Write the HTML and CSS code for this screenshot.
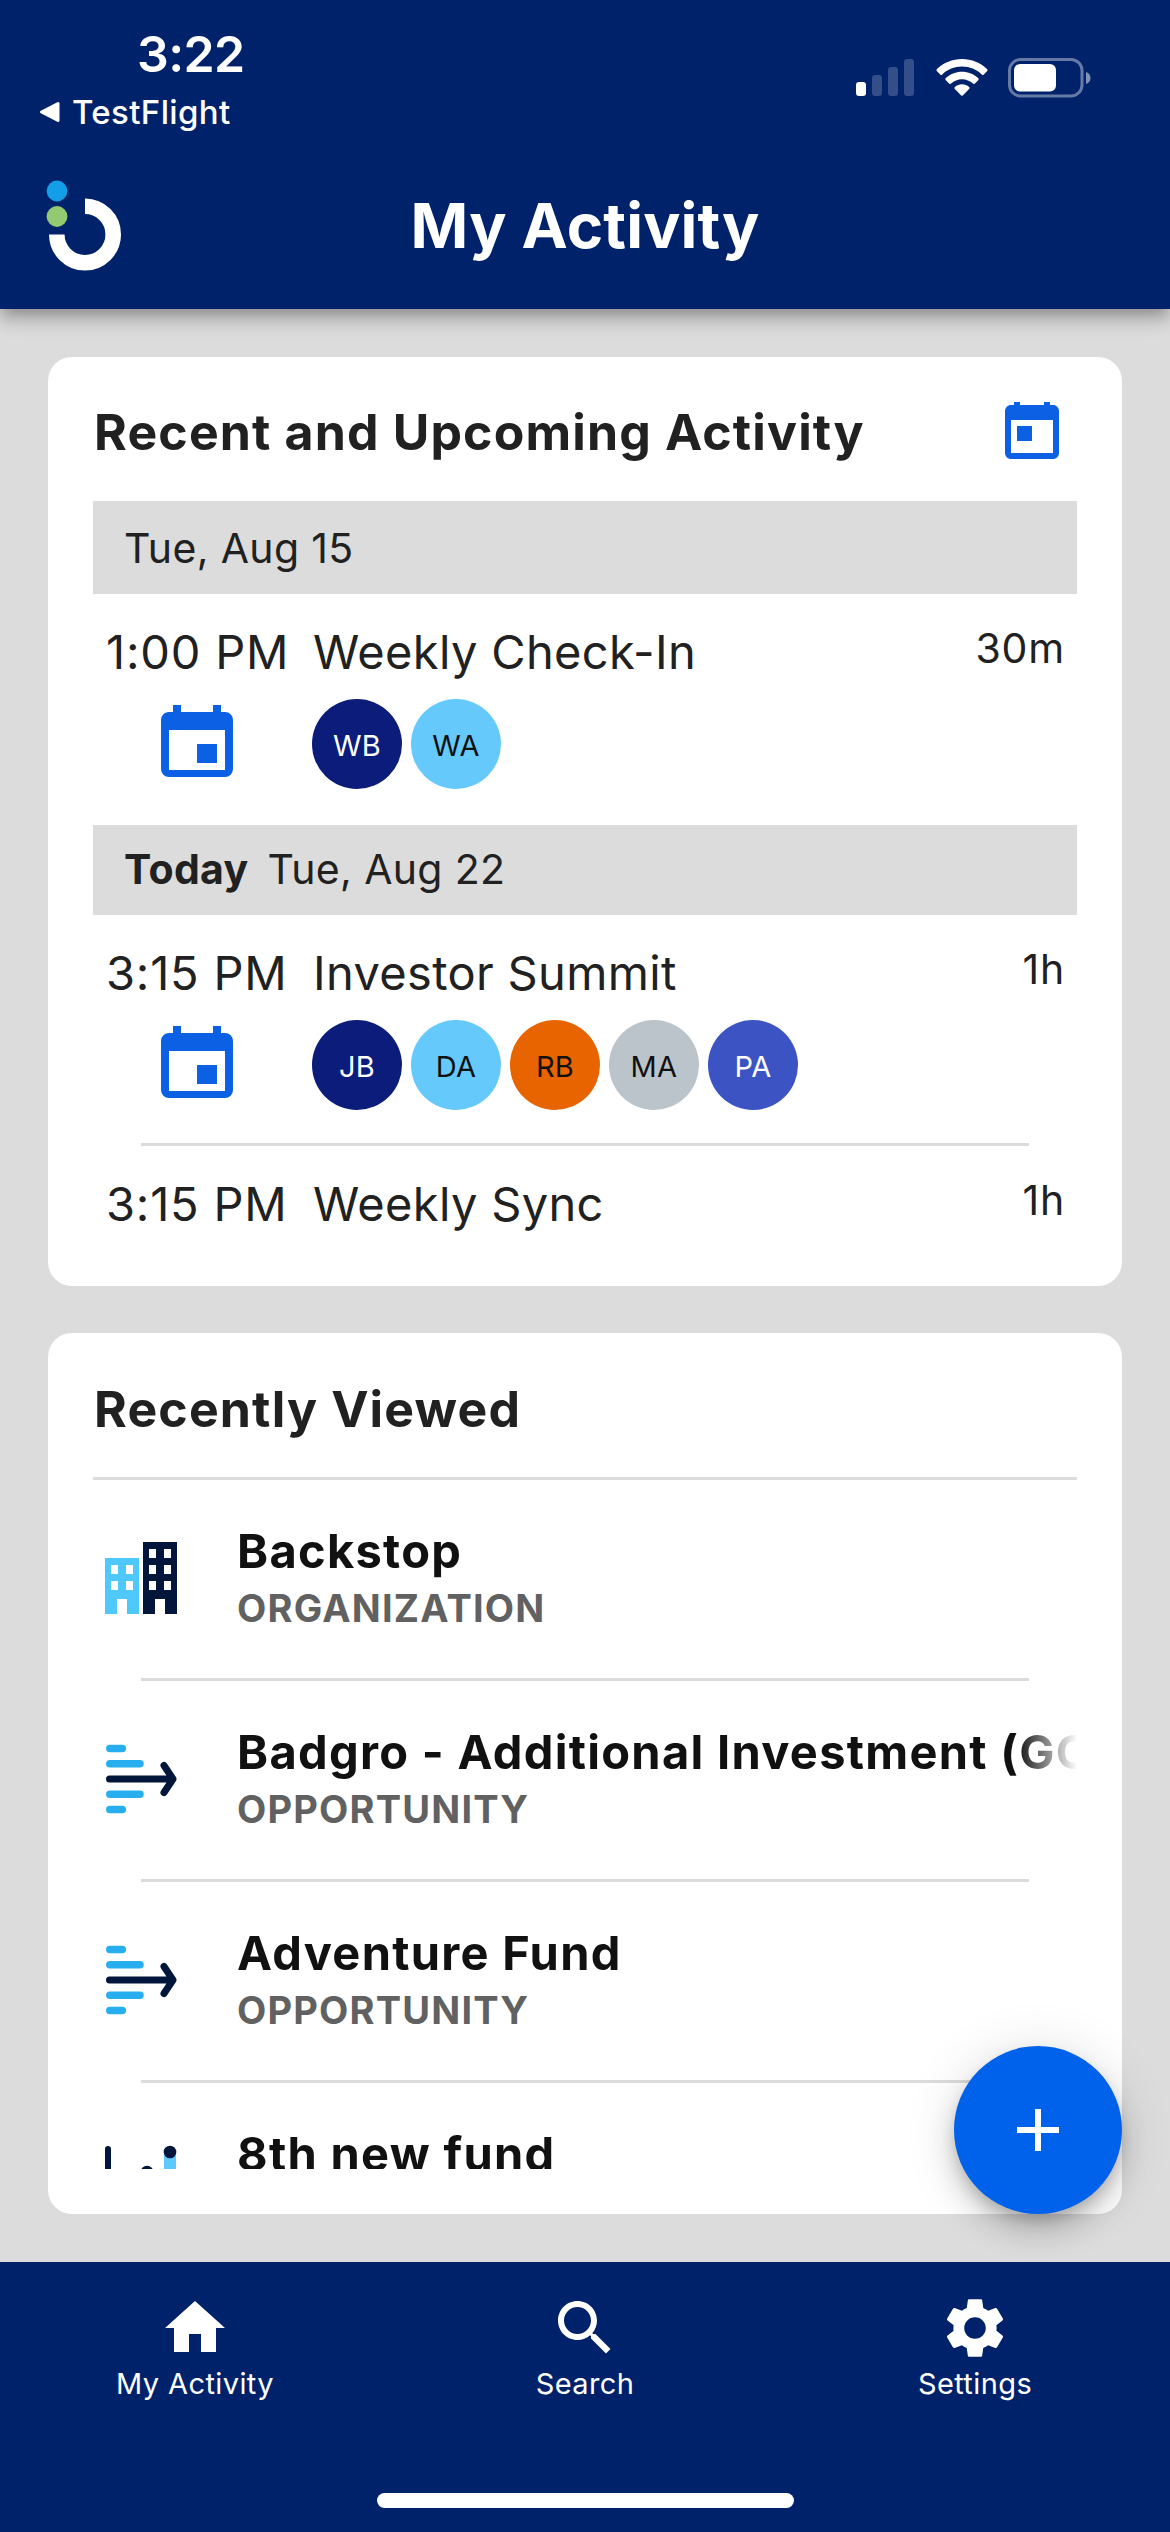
FILE: index.html
```html
<!DOCTYPE html>
<html lang="en">
<head>
    <meta charset="UTF-8">
    <meta name="viewport" content="width=device-width, initial-scale=1.0">
    <title>My Activity</title>
    <link rel="stylesheet" href="styles.css">
</head>
<body>

    <header class="header">
        <div class="status-bar">
            <div class="status-left">
                <div class="clock">3:22</div>
                <div class="back-app">
                    <svg width="21" height="22" viewBox="0 0 21 22"><path d="M19 2.5v17L2.5 11z" fill="#fff" stroke="#fff" stroke-width="3" stroke-linejoin="round"/></svg>
                    <span>TestFlight</span>
                </div>
            </div>
            <div class="status-right">
                <!-- Signal -->
                <svg width="58" height="40" viewBox="0 0 58 40" fill="#fff">
                    <rect x="0" y="24" width="10" height="14" rx="3"/>
                    <rect x="16" y="17" width="10" height="21" rx="3" opacity="0.2"/>
                    <rect x="32" y="9" width="10" height="29" rx="3" opacity="0.2"/>
                    <rect x="48" y="1" width="10" height="37" rx="3" opacity="0.2"/>
                </svg>
                <!-- Wifi -->
                <svg class="wifi" width="52" height="40" viewBox="0 0 52 40" fill="#fff">
                    <path d="M26 1C16.300 1 7.500 4.800 1 11a1.500 1.500 0 0 0 0 2.200l3.200 3.200a1.500 1.500 0 0 0 2.100 0C11.500 11.500 18.400 8.600 26 8.600s14.500 2.900 19.700 7.800a1.500 1.500 0 0 0 2.100 0l3.200-3.200a1.500 1.500 0 0 0 0-2.200C44.500 4.800 35.700 1 26 1z"/>
                    <path d="M26 13.700c-6.200 0-11.900 2.400-16.200 6.300a1.500 1.500 0 0 0 0 2.200l3.300 3.200a1.500 1.500 0 0 0 2 .1c2.900-2.600 6.700-4.200 10.900-4.200s8 1.600 10.900 4.200a1.500 1.500 0 0 0 2-.1l3.300-3.200a1.500 1.500 0 0 0 0-2.200c-4.300-3.900-10-6.300-16.200-6.300z"/>
                    <path d="M26 26.300c-2.700 0-5.200 1-7.100 2.600a1.400 1.400 0 0 0 0 2.100l6.100 6.300a1.400 1.400 0 0 0 2 0l6.100-6.300a1.400 1.400 0 0 0 0-2.100c-1.900-1.600-4.400-2.600-7.100-2.600z"/>
                </svg>
                <!-- Battery -->
                <svg class="battery" width="83" height="40" viewBox="0 0 83 40">
                    <rect x="1.500" y="1.500" width="72.500" height="36.500" rx="11" fill="none" stroke="#fff" stroke-width="3" opacity="0.4"/>
                    <rect x="6" y="6" width="42" height="27.500" rx="6" fill="#fff"/>
                    <path d="M78 14c3 1 4.500 3.300 4.500 6s-1.500 5-4.500 6z" fill="#fff" opacity="0.5"/>
                </svg>
            </div>
        </div>
        <div class="toolbar">
            <svg class="logo" width="78" height="92" viewBox="0 0 78 92">
                <circle cx="11" cy="11" r="10.400" fill="#139fe8"/>
                <circle cx="11" cy="36.500" r="10.400" fill="#93c971"/>
                <path d="M39 26.300A28.200 28.200 0 1 1 10.800 54.500" fill="none" stroke="#fff" stroke-width="15.600"/>
            </svg>
            <h1>My Activity</h1>
        </div>
    </header>

    <main class="content">
        <section class="card activity-card">
            <div class="card-header">
                <h2>Recent and Upcoming Activity</h2>
                <svg class="today-icon" width="72" height="72" viewBox="0 0 24 24" fill="#0b60e4"><path d="M19 3h-1V2h-2v1H8V2H6v1H5c-1.110 0-1.990.9-1.990 2L3 19c0 1.100.89 2 2 2h14c1.100 0 2-.9 2-2V5c0-1.100-.9-2-2-2zm0 16H5V8h14v11zM7 10h5v5H7z"/></svg>
            </div>

            <div class="day">Tue, Aug 15</div>
            <div class="event">
                <div class="event-top">
                    <span class="time">1:00 PM</span>
                    <span class="event-name">Weekly Check-In</span>
                    <span class="duration">30m</span>
                </div>
                <div class="event-bottom">
                    <svg class="event-icon" width="72" height="72" viewBox="0 0 72 72" fill="#0b60e4"><path fill-rule="evenodd" d="M8 7h4V0h8v7h32V0h8v7h4a8 8 0 0 1 8 8v49a8 8 0 0 1-8 8H8a8 8 0 0 1-8-8V15a8 8 0 0 1 8-8zM8 25v40h56V25zM36 39h20v19H36z"/></svg>
                    <div class="avatars">
                        <span class="avatar navy">WB</span>
                        <span class="avatar sky">WA</span>
                    </div>
                </div>
            </div>

            <div class="day day-today"><b>Today</b>Tue, Aug 22</div>
            <div class="event">
                <div class="event-top">
                    <span class="time">3:15 PM</span>
                    <span class="event-name">Investor Summit</span>
                    <span class="duration">1h</span>
                </div>
                <div class="event-bottom">
                    <svg class="event-icon" width="72" height="72" viewBox="0 0 72 72" fill="#0b60e4"><path fill-rule="evenodd" d="M8 7h4V0h8v7h32V0h8v7h4a8 8 0 0 1 8 8v49a8 8 0 0 1-8 8H8a8 8 0 0 1-8-8V15a8 8 0 0 1 8-8zM8 25v40h56V25zM36 39h20v19H36z"/></svg>
                    <div class="avatars">
                        <span class="avatar navy">JB</span>
                        <span class="avatar sky">DA</span>
                        <span class="avatar orange">RB</span>
                        <span class="avatar gray">MA</span>
                        <span class="avatar indigo">PA</span>
                    </div>
                </div>
            </div>
            <hr class="divider">
            <div class="event">
                <div class="event-top">
                    <span class="time">3:15 PM</span>
                    <span class="event-name">Weekly Sync</span>
                    <span class="duration">1h</span>
                </div>
            </div>
        </section>

        <section class="card viewed-card">
            <div class="card-header">
                <h2>Recently Viewed</h2>
            </div>

            <div class="viewed-list">
                <div class="item">
                    <svg class="item-icon" width="72" height="72" viewBox="0 0 72 72">
                        <path fill="#4fc9fb" fill-rule="evenodd" d="M0 16h34v56H22V57H12v15H0zM6 23v9h7v-9zM21 23v9h7v-9zM6 39v9h7v-9zM21 39v9h7v-9z"/>
                        <path fill="#02153a" fill-rule="evenodd" d="M38 0h34v72H60V57H50v15H38zM44 7v9h7V7zM59 7v9h7V7zM44 23v9h7v-9zM59 23v9h7v-9zM44 39v9h7v-9zM59 39v9h7v-9z"/>
                    </svg>
                    <div class="item-text">
                        <h3>Backstop</h3>
                        <p>ORGANIZATION</p>
                    </div>
                </div>
                <hr class="divider">
                <div class="item">
                    <svg class="item-icon" width="72" height="72" viewBox="0 0 72 72" fill="none" stroke-width="7.500" stroke-linecap="round">
                        <path stroke="#27aeee" d="M4.800 5.500h12.500M4.800 20.800H35M4.800 51.200H35M4.800 66.500h12.500"/>
                        <path stroke="#02153a" stroke-width="7" stroke-linejoin="round" d="M4.500 36h63M59 22.500L68 36l-9 13.500"/>
                    </svg>
                    <div class="item-text">
                        <h3>Badgro - Additional Investment (GO</h3>
                        <p>OPPORTUNITY</p>
                    </div>
                </div>
                <hr class="divider">
                <div class="item">
                    <svg class="item-icon" width="72" height="72" viewBox="0 0 72 72" fill="none" stroke-width="7.500" stroke-linecap="round">
                        <path stroke="#27aeee" d="M4.800 5.500h12.500M4.800 20.800H35M4.800 51.200H35M4.800 66.500h12.500"/>
                        <path stroke="#02153a" stroke-width="7" stroke-linejoin="round" d="M4.500 36h63M59 22.500L68 36l-9 13.500"/>
                    </svg>
                    <div class="item-text">
                        <h3>Adventure Fund</h3>
                        <p>OPPORTUNITY</p>
                    </div>
                </div>
                <hr class="divider">
                <div class="item">
                    <svg class="item-icon" width="72" height="72" viewBox="0 0 72 72">
                        <path fill="#5cc8fb" d="M59 8h12v58H59zM36 32h12v34H36z"/>
                        <path fill="none" stroke="#02153a" stroke-width="6" stroke-linecap="round" stroke-linejoin="round" d="M3 4v65h66"/>
                        <circle cx="65" cy="7" r="6.300" fill="#02153a"/>
                        <circle cx="42" cy="27" r="6.300" fill="#02153a"/>
                    </svg>
                    <div class="item-text">
                        <h3>8th new fund</h3>
                    </div>
                </div>
            </div>
        </section>

        <button class="fab" aria-label="Add">
            <svg width="42" height="42" viewBox="0 0 42 42"><path d="M21 0v42M0 21h42" stroke="#fff" stroke-width="6"/></svg>
        </button>
    </main>

    <nav class="tabs">
        <div class="tab-row">
            <a class="tab">
                <svg width="72" height="72" viewBox="0 0 24 24" fill="#fff"><path d="M10 20v-6h4v6h5v-8h3L12 3 2 12h3v8z"/></svg>
                <span>My Activity</span>
            </a>
            <a class="tab">
                <svg width="72" height="72" viewBox="0 0 24 24" fill="#fff"><path d="M15.500 14h-.79l-.28-.27C15.410 12.590 16 11.110 16 9.500 16 5.910 13.090 3 9.500 3S3 5.910 3 9.500 5.910 16 9.500 16c1.610 0 3.090-.59 4.230-1.570l.27.28v.79l5 4.990L20.490 19l-4.990-5zm-6 0C7.010 14 5 11.990 5 9.500S7.010 5 9.500 5 14 7.010 14 9.500 11.990 14 9.500 14z"/></svg>
                <span>Search</span>
            </a>
            <a class="tab">
                <svg width="72" height="72" viewBox="0 0 24 24" fill="#fff"><path d="M19.140 12.940c.04-.3.06-.61.06-.94 0-.32-.02-.64-.07-.94l2.030-1.580c.18-.14.23-.41.12-.61l-1.920-3.320c-.12-.22-.37-.29-.59-.22l-2.390.96c-.5-.38-1.030-.7-1.620-.94l-.36-2.540c-.04-.24-.24-.41-.48-.41h-3.840c-.24 0-.43.17-.47.41l-.36 2.540c-.59.24-1.130.57-1.620.94l-2.390-.96c-.22-.08-.47 0-.59.22L2.740 8.870c-.12.21-.08.47.12.61l2.030 1.580c-.05.3-.09.63-.09.94s.02.64.07.94l-2.030 1.580c-.18.14-.23.41-.12.61l1.920 3.320c.12.22.37.29.59.22l2.390-.96c.5.38 1.030.7 1.620.94l.36 2.540c.05.24.24.41.48.41h3.840c.24 0 .44-.17.47-.41l.36-2.540c.59-.24 1.130-.56 1.620-.94l2.390.96c.22.08.47 0 .59-.22l1.920-3.320c.12-.22.07-.47-.12-.61l-2.010-1.580zM12 15.600c-1.980 0-3.600-1.620-3.600-3.600s1.620-3.600 3.600-3.600 3.600 1.620 3.600 3.600-1.620 3.600-3.600 3.600z"/></svg>
                <span>Settings</span>
            </a>
        </div>
        <div class="home-indicator"></div>
    </nav>

</body>
</html>
```
FILE: styles.css
```css
* {
    box-sizing: border-box;
}
body {
    font-family: Inter, sans-serif;
    margin: 0;
    padding: 0;
    width: 1170px;
    height: 2532px;
    background-color: #dcdcdc;
    color: #212121;
    display: flex;
    flex-direction: column;
    overflow: hidden;
}
h1, h2, h3, p {
    margin: 0;
}
svg {
    display: block;
    flex-shrink: 0;
}

/* Header */
.header {
    position: relative;
    z-index: 1;
    height: 309px;
    background-color: #00226b;
    color: #fff;
    box-shadow: 0 6px 12px -3px rgba(0, 0, 0, 0.2), 0 12px 15px rgba(0, 0, 0, 0.14), 0 3px 30px rgba(0, 0, 0, 0.12);
}
.status-bar {
    height: 142px;
    padding: 24px 79px 0 39px;
    display: flex;
    justify-content: space-between;
}
.clock {
    font-size: 50px;
    font-weight: 600;
    line-height: 60px;
    letter-spacing: -0.6px;
    padding-left: 98px;
}
.back-app {
    margin-top: 8px;
    display: flex;
    align-items: center;
    gap: 12px;
    font-size: 33px;
    font-weight: 500;
    line-height: 40px;
    letter-spacing: 0.36px;
}
.status-right {
    display: flex;
    align-items: flex-start;
    padding-top: 34px;
}
.wifi {
    margin-left: 22px;
}
.battery {
    margin-left: 20px;
}
.toolbar {
    height: 167px;
    padding: 0 46px;
    display: grid;
    grid-template-columns: 78px 1fr 78px;
    align-items: center;
}
.toolbar h1 {
    font-size: 62px;
    font-weight: 650;
    letter-spacing: 0.2px;
    line-height: 74px;
    text-align: center;
}

/* Cards */
.content {
    position: relative;
    height: 1953px;
    padding: 48px;
    display: flex;
    flex-direction: column;
    gap: 47px;
}
.card {
    background-color: #fff;
    border-radius: 24px;
    padding: 0 45px;
    overflow: hidden;
}
.activity-card {
    height: 929px;
}
.viewed-card {
    height: 881px;
    padding-bottom: 45px;
}
.card-header {
    height: 147px;
    padding: 6px 9px 0 1px;
    border-bottom: 3px solid #dcdcdc;
    display: flex;
    align-items: center;
    justify-content: space-between;
}
.card-header h2 {
    font-size: 50px;
    font-weight: 700;
    letter-spacing: 1.15px;
}
.viewed-card .card-header {
    padding-top: 8px;
}
.divider {
    height: 3px;
    margin: 0 48px;
    border: none;
    background-color: #dcdcdc;
}

/* Activity */
.day {
    height: 90px;
    padding: 0 31px 3px;
    background-color: #dcdcdc;
    display: flex;
    align-items: center;
    font-size: 41px;
    letter-spacing: 0.35px;
}
.day-today {
    margin-top: 3px;
}
.day b {
    letter-spacing: 0.3px;
    margin-right: 19px;
}
.event {
    height: 228px;
    padding: 29px 12px 0 13px;
}
.event-top {
    display: flex;
    align-items: flex-start;
    font-size: 47px;
    line-height: 57px;
}
.time {
    width: 207px;
    letter-spacing: 0.8px;
}
.event-name {
    flex: 1;
    letter-spacing: 0.35px;
}
.duration {
    font-size: 41px;
    line-height: 50px;
    letter-spacing: 0.8px;
}
.event-bottom {
    margin-top: 19px;
    display: flex;
    align-items: flex-start;
}
.event-icon {
    margin: 6px 79px 0 55px;
}
.avatars {
    display: flex;
    gap: 9px;
}
.avatar {
    width: 90px;
    height: 90px;
    padding-top: 2px;
    border-radius: 50%;
    display: flex;
    align-items: center;
    justify-content: center;
    font-size: 29px;
    letter-spacing: 0.3px;
    color: #111;
}
.navy {
    background-color: #0b1c7b;
    color: #fff;
}
.sky {
    background-color: #66c9fb;
}
.orange {
    background-color: #e76400;
}
.gray {
    background-color: #bac4ca;
}
.indigo {
    background-color: #3c53c4;
    color: #fff;
}

/* Recently viewed */
.viewed-list {
    height: 689px;
    overflow: hidden;
}
.item {
    height: 198px;
    padding-left: 12px;
    display: flex;
    align-items: flex-start;
}
.item-icon {
    margin: 62px 60px 0 0;
}
.item-text {
    flex: 1;
    min-width: 0;
    padding-top: 42px;
}
.item h3 {
    font-size: 47px;
    font-weight: 700;
    line-height: 57px;
    letter-spacing: 1.3px;
    color: #111;
    white-space: nowrap;
    overflow: hidden;
    -webkit-mask-image: linear-gradient(to right, #000 calc(100% - 60px), transparent);
    mask-image: linear-gradient(to right, #000 calc(100% - 60px), transparent);
}
.item p {
    font-size: 38px;
    font-weight: 650;
    line-height: 59px;
    letter-spacing: 1.2px;
    color: #616161;
}

/* Floating button */
.fab {
    position: absolute;
    right: 48px;
    bottom: 48px;
    width: 168px;
    height: 168px;
    padding: 0;
    border: none;
    border-radius: 50%;
    background-color: #0061eb;
    display: flex;
    align-items: center;
    justify-content: center;
    box-shadow: 0 9px 15px -3px rgba(0, 0, 0, 0.2), 0 18px 30px rgba(0, 0, 0, 0.14), 0 3px 54px rgba(0, 0, 0, 0.12);
}

/* Bottom tabs */
.tabs {
    position: relative;
    height: 270px;
    padding: 30px 0 24px;
    background-color: #00226b;
    color: #fff;
    display: flex;
    flex-direction: column;
    justify-content: space-between;
    align-items: center;
}
.tab-row {
    width: 100%;
    display: flex;
}
.tab {
    flex: 1;
    display: flex;
    flex-direction: column;
    align-items: center;
    font-size: 29px;
    line-height: 40px;
    letter-spacing: 0.4px;
}
.home-indicator {
    width: 417px;
    height: 15px;
    border-radius: 8px;
    background-color: #fff;
}
```
